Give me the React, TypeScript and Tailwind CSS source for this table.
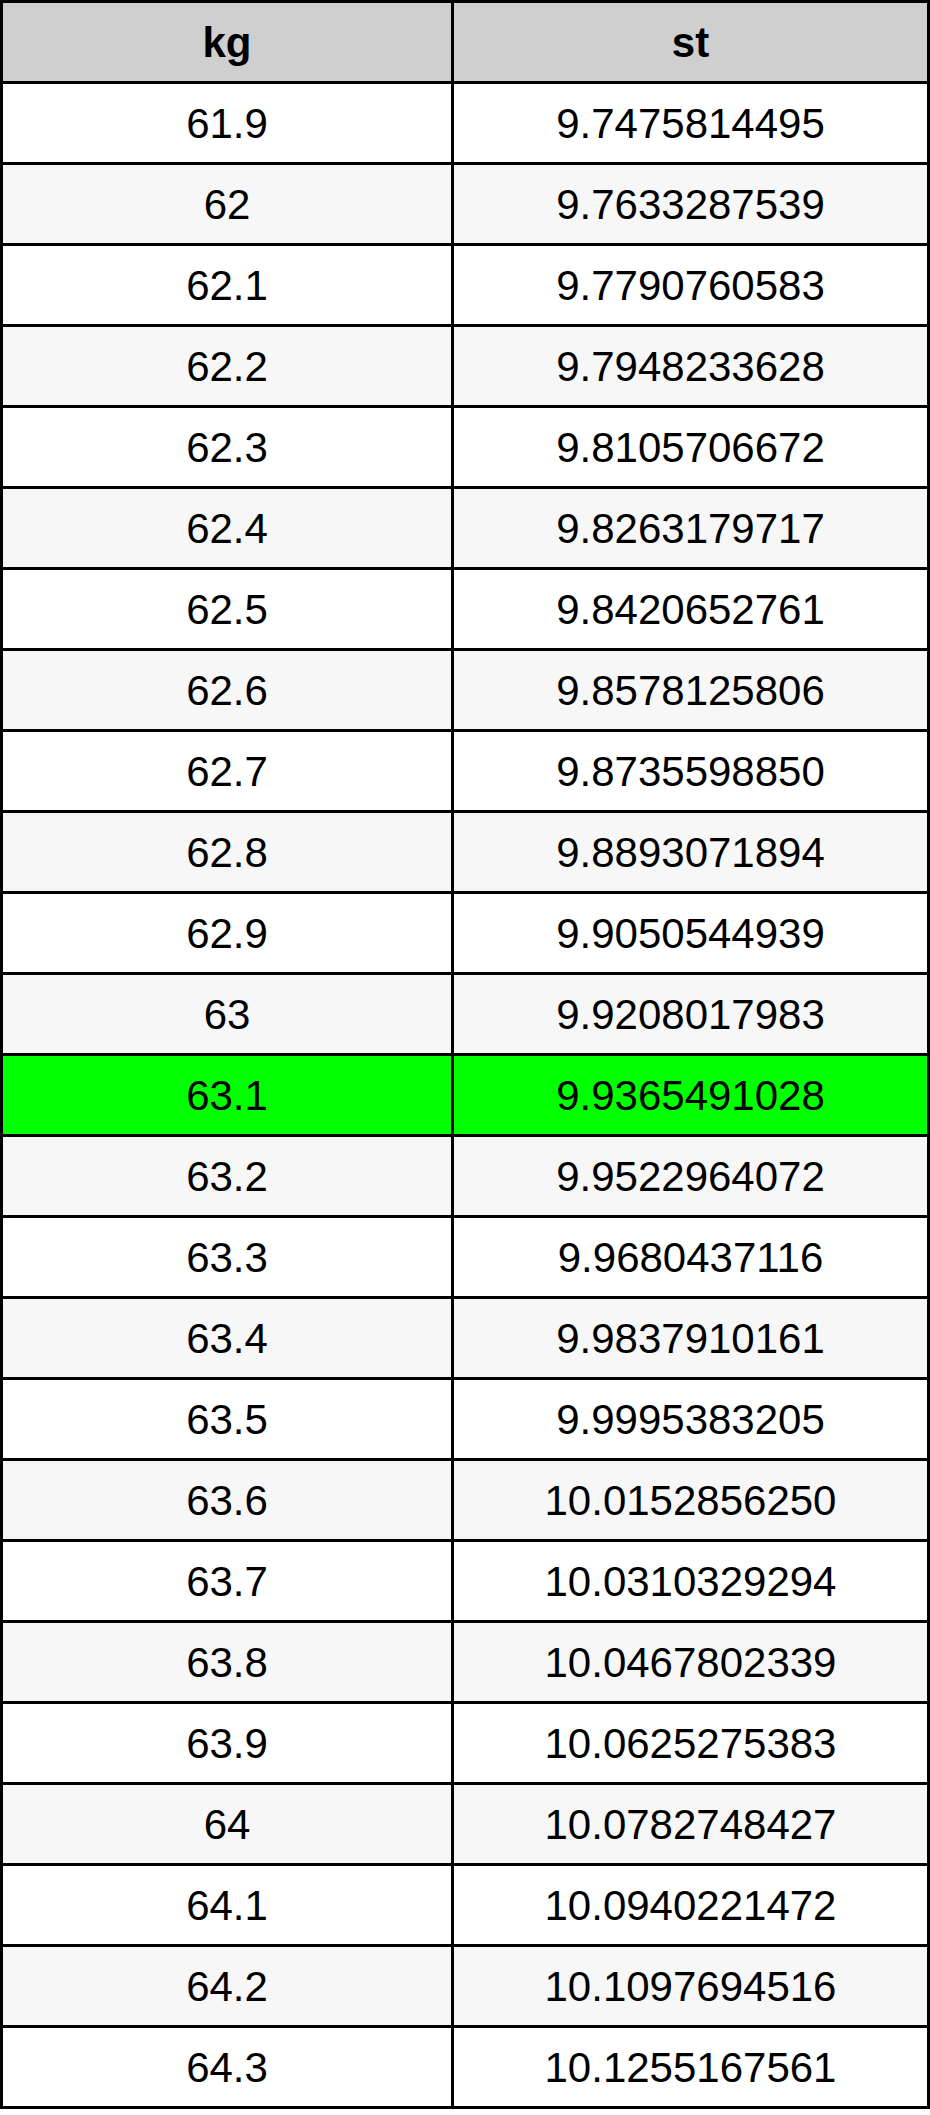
import React from "react";

const rows: [string, string][] = [
  ["61.9", "9.7475814495"],
  ["62", "9.7633287539"],
  ["62.1", "9.7790760583"],
  ["62.2", "9.7948233628"],
  ["62.3", "9.8105706672"],
  ["62.4", "9.8263179717"],
  ["62.5", "9.8420652761"],
  ["62.6", "9.8578125806"],
  ["62.7", "9.8735598850"],
  ["62.8", "9.8893071894"],
  ["62.9", "9.9050544939"],
  ["63", "9.9208017983"],
  ["63.1", "9.9365491028"],
  ["63.2", "9.9522964072"],
  ["63.3", "9.9680437116"],
  ["63.4", "9.9837910161"],
  ["63.5", "9.9995383205"],
  ["63.6", "10.0152856250"],
  ["63.7", "10.0310329294"],
  ["63.8", "10.0467802339"],
  ["63.9", "10.0625275383"],
  ["64", "10.0782748427"],
  ["64.1", "10.0940221472"],
  ["64.2", "10.1097694516"],
  ["64.3", "10.1255167561"],
];

export default function App() {
  return (
    <div className="bg-white w-[930px]" style={{ fontFamily: '"Liberation Sans", Arial, sans-serif' }}>
      <div className="w-[930px] border-[3px] border-black text-black">
        <div className="flex h-[78px] bg-[#cfcfcf] font-bold text-[42px]">
          <div className="w-[448px] flex items-center justify-center border-r-[3px] border-black box-content">kg</div>
          <div className="flex-1 flex items-center justify-center">st</div>
        </div>
        {rows.map(([kg, st], i) => {
          const bg = kg === "63.1" ? "bg-[#00ff00]" : i % 2 === 1 ? "bg-[#f7f7f7]" : "bg-white";
          return (
            <div key={kg} className={`flex h-[81px] border-t-[3px] border-black text-[42px] ${bg}`}>
              <div className="w-[448px] flex items-center justify-center border-r-[3px] border-black box-content">{kg}</div>
              <div className="flex-1 flex items-center justify-center">{st}</div>
            </div>
          );
        })}
      </div>
    </div>
  );
}
